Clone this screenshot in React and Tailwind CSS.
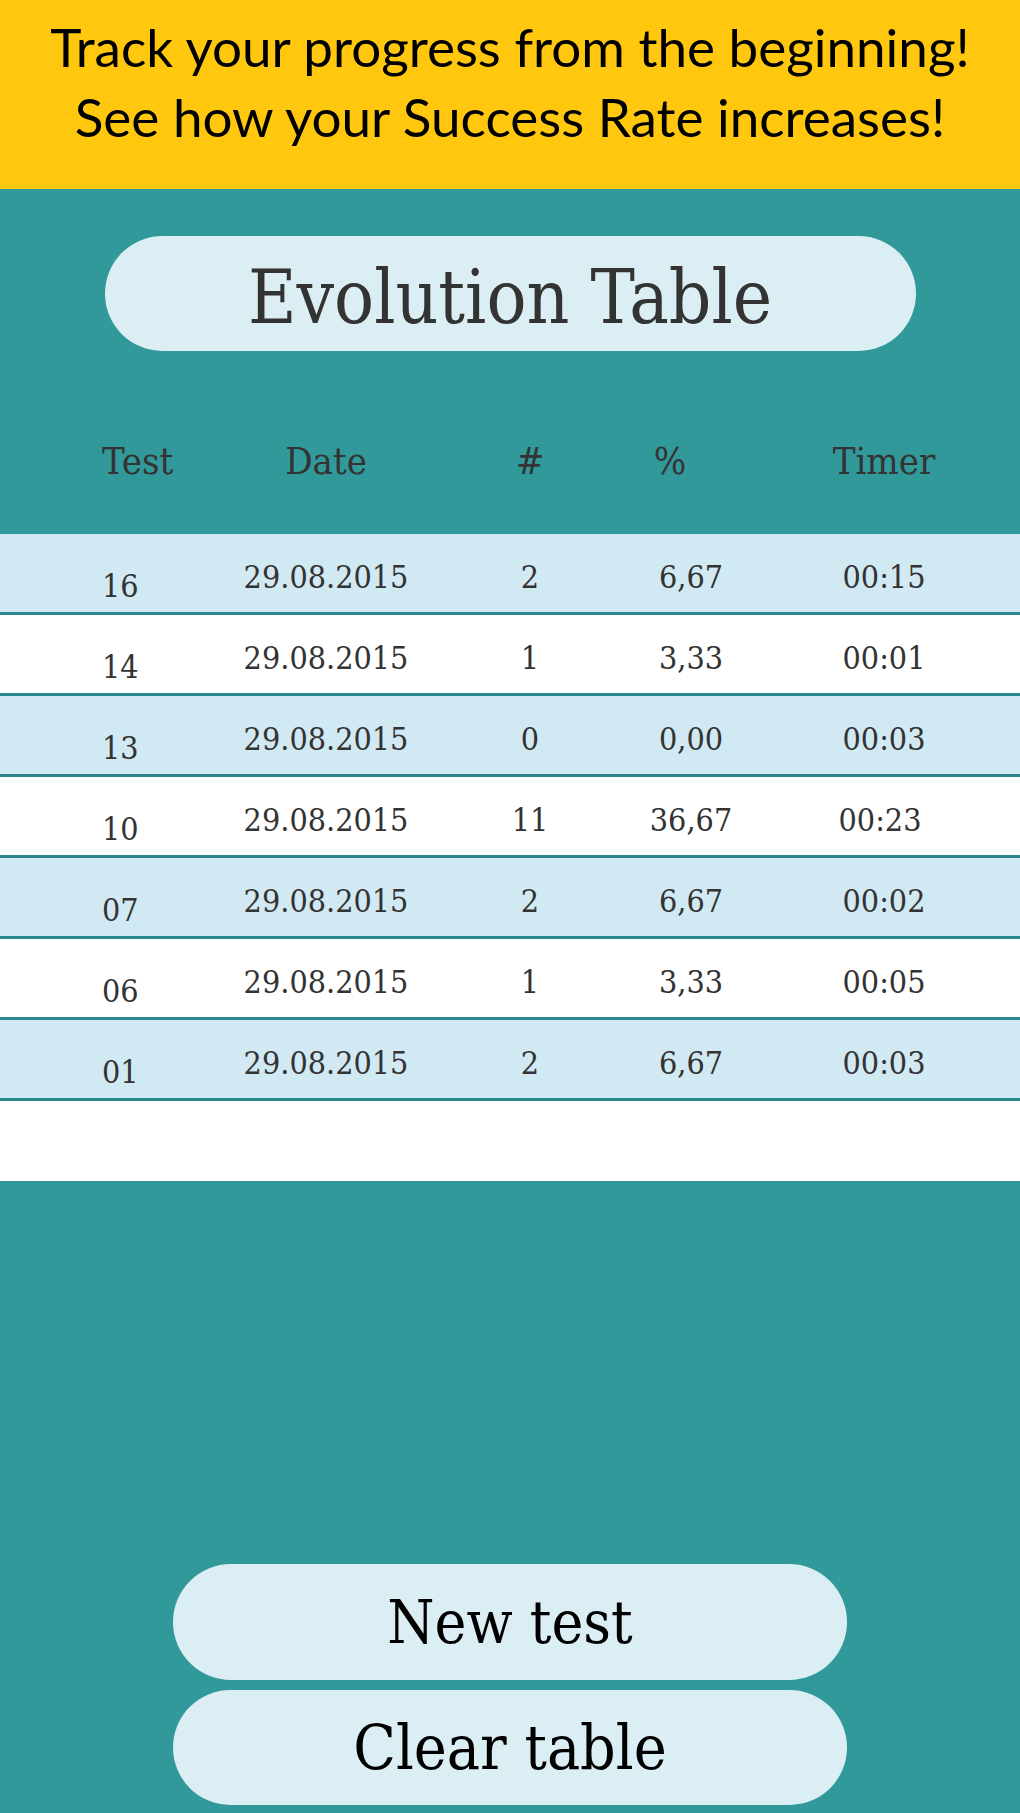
const rows = [
  { test: "16", date: "29.08.2015", n: "2", pct: "6,67", timer: "00:15" },
  { test: "14", date: "29.08.2015", n: "1", pct: "3,33", timer: "00:01" },
  { test: "13", date: "29.08.2015", n: "0", pct: "0,00", timer: "00:03" },
  { test: "10", date: "29.08.2015", n: "11", pct: "36,67", timer: "00:23" },
  { test: "07", date: "29.08.2015", n: "2", pct: "6,67", timer: "00:02" },
  { test: "06", date: "29.08.2015", n: "1", pct: "3,33", timer: "00:05" },
  { test: "01", date: "29.08.2015", n: "2", pct: "6,67", timer: "00:03" },
];

const cols = "grid grid-cols-[226px_200px_208px_114px_272px]";
const serif = "font-['DejaVu_Serif','Liberation_Serif',serif] [font-stretch:condensed]";

function PillButton({ children, className = "" }) {
  return (
    <button
      className={`flex items-center justify-center rounded-full bg-[#dbeef4] text-black ${serif} ${className}`}
    >
      {children}
    </button>
  );
}

export default function App() {
  return (
    <div className="flex min-h-[1813px] w-[1020px] flex-col bg-[#32999a]">
      {/* Banner */}
      <div className="flex h-[189px] flex-col items-center bg-[#ffc80f] pt-[12px] font-['Lato','Liberation_Sans',sans-serif] text-[53px] leading-[70px] text-black">
        <div>Track your progress from the beginning!</div>
        <div>See how your Success Rate increases!</div>
      </div>

      {/* Title */}
      <div className="mt-[47px] flex justify-center">
        <div
          className={`flex h-[115px] w-[811px] items-center justify-center rounded-full bg-[#dbeef4] pt-[8px] text-[74px] text-[#333] ${serif}`}
        >
          Evolution Table
        </div>
      </div>

      {/* Column headers */}
      <div className={`${cols} h-[183px] items-center pt-[36px] text-[38px] leading-none text-[#333] ${serif}`}>
        <div className="pl-[102px]">Test</div>
        <div className="text-center">Date</div>
        <div className="text-center">#</div>
        <div className="pr-[42px] text-center">%</div>
        <div className="text-center">Timer</div>
      </div>

      {/* Rows */}
      <div className="bg-white">
        {rows.map((r, i) => (
          <div
            key={r.test}
            className={`${cols} h-[81px] items-center border-b-[3px] border-[#2a8a8b] pt-[7px] text-[32px] leading-none text-[#333] ${serif} ${
              i % 2 === 0 ? "bg-[#d1e9f2]" : "bg-white"
            }`}
          >
            <div className="pl-[102px] pt-[18px]">{r.test}</div>
            <div className="text-center">{r.date}</div>
            <div className="text-center">{r.n}</div>
            <div className="text-center">{r.pct}</div>
            <div className={r.test === "10" ? "pr-[8px] text-center" : "text-center"}>{r.timer}</div>
          </div>
        ))}
        <div className="h-[80px]" />
      </div>

      {/* Actions */}
      <div className="mt-auto flex flex-col items-center gap-[10px] pb-[8px]">
        <PillButton className="h-[116px] w-[674px] text-[60px]">New test</PillButton>
        <PillButton className="h-[115px] w-[674px] text-[62px]">Clear table</PillButton>
      </div>
    </div>
  );
}
